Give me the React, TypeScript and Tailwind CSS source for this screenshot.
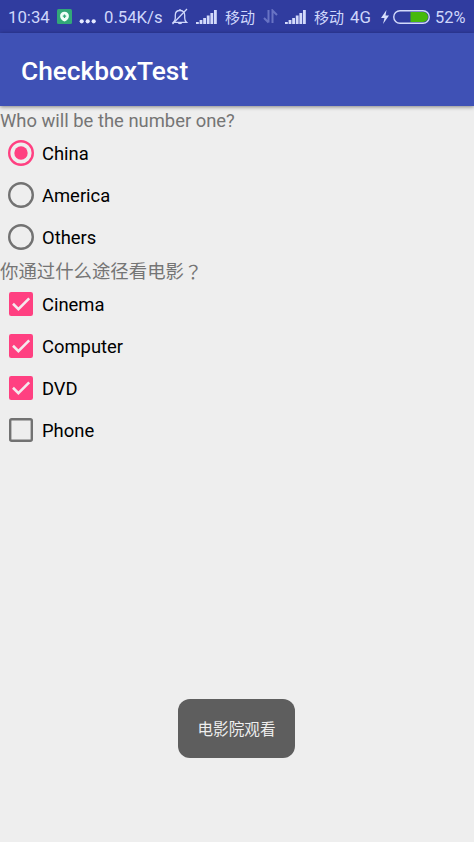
import { useState } from "react";

interface Option {
  id: string;
  label: string;
}

const countries: Option[] = [
  { id: "china", label: "China" },
  { id: "america", label: "America" },
  { id: "others", label: "Others" },
];

const channels: Option[] = [
  { id: "cinema", label: "Cinema" },
  { id: "computer", label: "Computer" },
  { id: "dvd", label: "DVD" },
  { id: "phone", label: "Phone" },
];

function SignalIcon() {
  return (
    <svg className="w-[21px] h-[15px] shrink-0" viewBox="0 0 21 15" fill="#d3dafb">
      <rect x="0" y="13" width="2.8" height="2" />
      <rect x="3.6" y="11" width="2.8" height="4" />
      <rect x="7.2" y="9" width="2.8" height="6" />
      <rect x="10.8" y="6.5" width="2.8" height="8.5" />
      <rect x="14.4" y="4" width="2.8" height="11" />
      <rect x="18" y="1" width="2.8" height="14" />
    </svg>
  );
}

function StatusBar() {
  return (
    <div className="flex h-[33px] items-center bg-[#303c9f] pl-2 text-[16.8px] whitespace-nowrap text-[#cfd7fb]">
      <span className="w-[49px] pt-[3px]">10:34</span>
      <svg className="w-[15px] h-[15px] shrink-0" viewBox="0 0 15 15">
        <rect width="15" height="15" rx="1.5" fill="#32a878" />
        <path
          d="M7.5 2.7c2.7 0 4.4 1.8 4.4 4.2 0 2.9-2.1 4.8-4.4 5.5-2.3-.7-4.4-2.6-4.4-5.5 0-2.4 1.7-4.2 4.4-4.2z"
          fill="#effff8"
        />
        <path d="M7.5 5.5v3.4M5.8 7.2h3.4" stroke="#32a878" strokeWidth="1.3" />
      </svg>
      <svg className="ml-[7px] w-[18px] h-[15px] shrink-0" viewBox="0 0 18 15" fill="#e6eaff">
        <circle cx="2.7" cy="12.3" r="2.1" />
        <circle cx="8.7" cy="12.3" r="2.1" />
        <circle cx="14.7" cy="12.3" r="2.1" />
      </svg>
      <span className="ml-[7px] w-[67px] pt-[3px] text-[16.7px]">0.54K/s</span>
      <svg
        className="w-[18px] h-[18px] shrink-0"
        viewBox="0 0 18 18"
        fill="none"
        stroke="#cfd7fb"
        strokeWidth="1.3"
      >
        <path d="M2.5 14.3h13c-1.4-1.2-1.8-2.3-1.8-4.3V7.2c0-3-1.8-4.7-4.7-4.7S4.3 4.2 4.3 7.2V10c0 2-.4 3.1-1.8 4.3z" />
        <path d="M7.2 14.5c.2 1.5 3.4 1.5 3.6 0M9 1v1.5M1.5 16 16 1" />
      </svg>
      <span className="ml-[7px] mr-2 flex">
        <SignalIcon />
      </span>
      <span className="w-[38px] pt-[3px] text-[15px]">移动</span>
      <svg
        className="w-[15px] h-[15px] shrink-0"
        viewBox="0 0 15 15"
        fill="none"
        stroke="#6873c4"
        strokeWidth="2"
      >
        <path d="M5.5 1v12.5M1 9l4.5 4.5M9.5 14V1.5L14 6" />
      </svg>
      <span className="ml-[7px] mr-2 flex">
        <SignalIcon />
      </span>
      <span className="w-[36px] pt-[3px] text-[15px]">移动</span>
      <span className="w-[31px] pt-[3px]">4G</span>
      <svg className="w-[8px] h-[14px] shrink-0" viewBox="0 0 8 14" fill="#d8dffc">
        <path d="M5.5 0 0 8h3.5L2 14 8 5.5H4.5z" />
      </svg>
      <svg className="ml-1 w-[37px] h-[14px] shrink-0" viewBox="0 0 37 14">
        <path d="M17.5 2H30a5 5 0 0 1 0 10H17.5z" fill="#46b90c" />
        <rect x=".75" y=".75" width="35.5" height="12.5" rx="6.25" fill="none" stroke="#d3dafb" strokeWidth="1.4" />
      </svg>
      <span className="ml-[5px] pt-[3px] text-[16.4px]">52%</span>
    </div>
  );
}

function RadioIcon({ checked }: { checked: boolean }) {
  const color = checked ? "#ff4081" : "#727272";

  return (
    <svg className="w-[26px] h-[26px] shrink-0" viewBox="0 0 26 26">
      <circle cx="13" cy="13" r="11.8" fill="none" stroke={color} strokeWidth="2.4" />
      {checked && <circle cx="13" cy="13" r="6.7" fill={color} />}
    </svg>
  );
}

function CheckboxIcon({ checked }: { checked: boolean }) {
  return (
    <svg className="w-[26px] h-[26px] shrink-0" viewBox="0 0 26 26">
      {checked ? (
        <>
          <rect x="1" y="1" width="24" height="24" rx="2.2" fill="#ff4081" />
          <path d="m5 12.8 5.4 5.3L21.2 7.4" fill="none" stroke="#f5e9ee" strokeWidth="2.6" />
        </>
      ) : (
        <rect x="2.2" y="2.2" width="21.6" height="21.6" rx="1.5" fill="none" stroke="#727272" strokeWidth="2.4" />
      )}
    </svg>
  );
}

export default function App() {
  const [country, setCountry] = useState<string>("china");
  const [selected, setSelected] = useState<string[]>(["cinema", "computer", "dvd"]);

  const toggle = (id: string) => {
    setSelected((prev) =>
      prev.includes(id) ? prev.filter((item) => item !== id) : [...prev, id]
    );
  };

  return (
    <div className="relative flex h-[842px] w-[474px] flex-col overflow-hidden bg-[#eeeeee] font-[Roboto,'Noto_Sans_CJK_SC',sans-serif]">
      <StatusBar />
      <header className="flex h-[73px] shrink-0 items-center bg-[#3f51b5] pt-1 pl-[21px] shadow-[0_1px_4px_rgba(0,0,0,0.45)]">
        <h1 className="text-[26.3px] font-medium text-white">CheckboxTest</h1>
      </header>

      <main>
        <p className="flex h-[26px] items-center pt-[3px] text-[18.4px] text-[#757575]">
          Who will be the number one?
        </p>
        <div role="radiogroup">
          {countries.map(({ id, label }) => (
            <button
              key={id}
              role="radio"
              aria-checked={country === id}
              onClick={() => setCountry(id)}
              className="flex h-[42px] w-full items-center pl-2 text-[18.4px] text-black"
            >
              <RadioIcon checked={country === id} />
              <span className="ml-2 pt-[2px]">{label}</span>
            </button>
          ))}
        </div>

        <p className="flex h-[25px] items-center pt-[3px] text-[18.4px] text-[#757575]">
          你通过什么途径看电影
          <span className="font-['Noto_Sans_CJK_TC',sans-serif]">？</span>
        </p>
        <div>
          {channels.map(({ id, label }) => (
            <button
              key={id}
              role="checkbox"
              aria-checked={selected.includes(id)}
              onClick={() => toggle(id)}
              className="flex h-[42px] w-full items-center pl-2 text-[18.4px] text-black"
            >
              <CheckboxIcon checked={selected.includes(id)} />
              <span className="ml-2 pt-[2px]">{label}</span>
            </button>
          ))}
        </div>
      </main>

      <div className="absolute left-[178px] top-[699px] flex h-[59px] w-[117px] items-center justify-center rounded-xl bg-[#5e5e5e] pt-1 text-[15.6px] text-[#eeeeee]">
        电影院观看
      </div>
    </div>
  );
}
